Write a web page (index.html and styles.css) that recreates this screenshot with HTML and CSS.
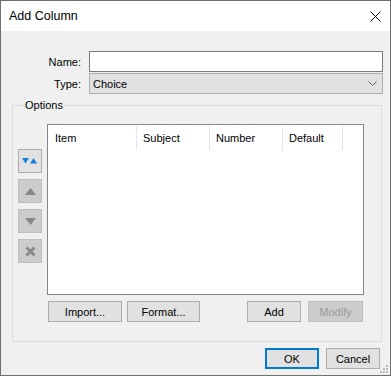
FILE: index.html
```html
<!DOCTYPE html>
<html lang="en">
<head>
    <meta charset="UTF-8">
    <title>Add Column</title>
    <link rel="stylesheet" href="styles.css">
</head>
<body>
    <div class="window">
        <div class="titlebar">
            <span class="title">Add Column</span>
            <svg class="close" width="11" height="11" viewBox="0 0 11 11">
                <path d="M0.5 0.5 L10.5 10.5 M10.5 0.5 L0.5 10.5" stroke="#000" stroke-width="1" fill="none"/>
            </svg>
        </div>

        <div class="form">
            <label for="name">Name:</label>
            <input type="text" id="name">
            <label>Type:</label>
            <div class="select">
                <span>Choice</span>
                <svg width="9" height="5" viewBox="0 0 9 5">
                    <path d="M0.5 0.5 L4.5 4.5 L8.5 0.5" stroke="#606060" stroke-width="1" fill="none"/>
                </svg>
            </div>
        </div>

        <fieldset class="group">
            <legend>Options</legend>
            <div class="group-body">
                <div class="side">
                    <button class="icon-btn">
                        <svg width="16" height="6" viewBox="0 0 16 6">
                            <path d="M0 0 H7 L3.5 5.5 Z" fill="#1a7fdc"/>
                            <path d="M8 5.5 H15 L11.5 0 Z" fill="#1a7fdc"/>
                        </svg>
                    </button>
                    <button class="icon-btn" disabled>
                        <svg width="11" height="7" viewBox="0 0 11 7">
                            <path d="M0 7 H11 L5.5 0 Z" fill="#888"/>
                        </svg>
                    </button>
                    <button class="icon-btn" disabled>
                        <svg width="11" height="7" viewBox="0 0 11 7">
                            <path d="M0 0 H11 L5.5 7 Z" fill="#888"/>
                        </svg>
                    </button>
                    <button class="icon-btn" disabled>
                        <svg width="11" height="11" viewBox="0 0 11 11">
                            <path d="M1.5 1.5 L9.5 9.5 M9.5 1.5 L1.5 9.5" stroke="#888" stroke-width="2.8" fill="none"/>
                        </svg>
                    </button>
                </div>

                <div class="list-area">
                    <div class="list">
                        <div class="list-header">
                            <div class="col col-item">Item</div>
                            <div class="col col-subject">Subject</div>
                            <div class="col col-number">Number</div>
                            <div class="col col-default">Default</div>
                        </div>
                    </div>
                    <div class="list-buttons">
                        <div class="btn-group">
                            <button class="btn btn-import">Import...</button>
                            <button class="btn btn-format">Format...</button>
                        </div>
                        <div class="btn-group btn-group-right">
                            <button class="btn">Add</button>
                            <button class="btn" disabled>Modify</button>
                        </div>
                    </div>
                </div>
            </div>
        </fieldset>

        <div class="footer">
            <button class="btn btn-default">OK</button>
            <button class="btn">Cancel</button>
        </div>

        <svg class="grip" width="9" height="9" viewBox="0 0 9 9">
            <rect x="6" y="0" width="2" height="2" fill="#bcbcbc"/>
            <rect x="3" y="3" width="2" height="2" fill="#bcbcbc"/>
            <rect x="6" y="3" width="2" height="2" fill="#bcbcbc"/>
            <rect x="0" y="6" width="2" height="2" fill="#bcbcbc"/>
            <rect x="3" y="6" width="2" height="2" fill="#bcbcbc"/>
            <rect x="6" y="6" width="2" height="2" fill="#bcbcbc"/>
        </svg>
    </div>
</body>
</html>
```

FILE: styles.css
```css
body {
    margin: 0;
    font-family: 'Liberation Sans', Arial, sans-serif;
    font-size: 11px;
    color: #000;
    background-color: #f0f0f0;
}
.window {
    position: relative;
    width: 391px;
    height: 376px;
    box-sizing: border-box;
    border: 1px solid #6f6f6f;
    background-color: #f0f0f0;
    display: flex;
    flex-direction: column;
}
.titlebar {
    height: 30px;
    flex: none;
    background-color: white;
    display: flex;
    align-items: center;
    justify-content: space-between;
    padding-left: 8px;
}
.title {
    font-size: 12.5px;
}
.close {
    margin-right: 9px;
}
.form {
    display: grid;
    grid-template-columns: 80px 1fr;
    column-gap: 8px;
    row-gap: 1px;
    padding: 20px 7px 0 0;
    align-items: center;
}
.form label {
    text-align: right;
}
.form input {
    height: 21px;
    box-sizing: border-box;
    margin: 0;
    border: 1px solid #7a7a7a;
    background-color: white;
    font: inherit;
    padding: 0 3px;
}
.select {
    height: 21px;
    box-sizing: border-box;
    border: 1px solid #adadad;
    background-color: #e1e1e1;
    display: flex;
    align-items: center;
    justify-content: space-between;
    padding: 0 5px 0 3px;
}
.group {
    margin: 4px 8px 0 11px;
    padding: 12px 17px 19px 5px;
    border: 1px solid #dcdcdc;
    min-inline-size: 0;
}
.group legend {
    margin-left: 6px;
    padding: 0 1px;
    line-height: 14px;
}
.group-body {
    display: flex;
    gap: 5px;
}
.side {
    display: flex;
    flex-direction: column;
    gap: 6px;
    padding-top: 25px;
}
.icon-btn {
    width: 24px;
    height: 24px;
    padding: 0;
    border: 1px solid #adadad;
    background-color: #e1e1e1;
    display: flex;
    align-items: center;
    justify-content: center;
}
.icon-btn:disabled {
    border-color: #bfbfbf;
    background-color: #cccccc;
}
.list-area {
    flex: 1;
    display: flex;
    flex-direction: column;
}
.list {
    height: 171px;
    box-sizing: border-box;
    border: 1px solid #828790;
    background-color: white;
}
.list-header {
    display: flex;
    margin-top: 1px;
    height: 24px;
}
.col {
    box-sizing: border-box;
    border-right: 1px solid #e5e5e5;
    padding-left: 7px;
    display: flex;
    align-items: center;
}
.col-item {
    width: 89px;
}
.col-subject {
    width: 73px;
    padding-left: 6px;
}
.col-number {
    width: 73px;
    padding-left: 6px;
}
.col-default {
    width: 60px;
    padding-left: 6px;
}
.list-buttons {
    display: flex;
    justify-content: space-between;
    margin-top: 6px;
    padding: 0 1px;
}
.btn-group {
    display: flex;
    gap: 5px;
}
.btn-group-right {
    gap: 7px;
}
.btn {
    height: 21px;
    width: 54px;
    padding: 0;
    box-sizing: border-box;
    border: 1px solid #adadad;
    background-color: #e1e1e1;
    font: inherit;
    color: #000;
}
.btn:disabled {
    border-color: #bfbfbf;
    background-color: #cccccc;
    color: #9a9a9a;
}
.btn-import {
    width: 74px;
}
.btn-format {
    width: 73px;
}
.btn-group-right .btn:last-child {
    width: 55px;
}
.footer {
    display: flex;
    justify-content: flex-end;
    gap: 7px;
    margin-top: 6px;
    padding-right: 10px;
}
.btn-default {
    border: 2px solid #0078d7;
}
.grip {
    position: absolute;
    right: 1px;
    bottom: 1px;
}
```
